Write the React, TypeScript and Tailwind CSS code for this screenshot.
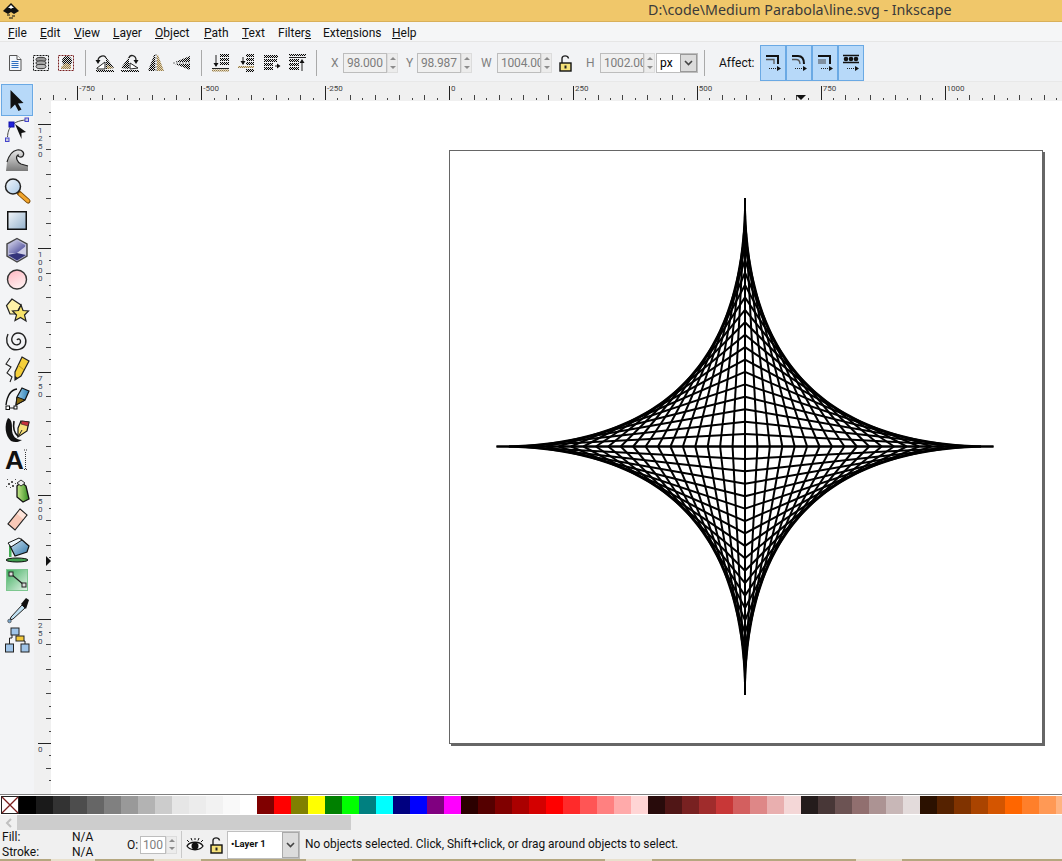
const FONT = "font-['Roboto',sans-serif]";

const swatches = [
  "#000000", "#1a1a1a", "#333333", "#4d4d4d", "#666666", "#808080", "#999999", "#b3b3b3", "#cccccc", "#e6e6e6", "#ececec", "#f2f2f2", "#f9f9f9", "#ffffff",
  "#800000", "#ff0000", "#808000", "#ffff00", "#008000", "#00ff00", "#008080", "#00ffff", "#000080", "#0000ff", "#800080", "#ff00ff",
  "#2b0000", "#550000", "#800000", "#aa0000", "#d40000", "#ff0000", "#ff2a2a", "#ff5555", "#ff8080", "#ffaaaa", "#ffd5d5",
  "#280b0b", "#501616", "#782121", "#a02c2c", "#c83737", "#d35f5f", "#de8787", "#e9afaf", "#f4d7d7",
  "#241c1c", "#483737", "#6c5353", "#916f6f", "#ac9393", "#c8b7b7", "#e3dbdb",
  "#2b1100", "#552200", "#803300", "#aa4400", "#d45500", "#ff6600", "#ff7f2a", "#ff9955", "#ffb380", "#ffccaa",
];

const menus: [string, string, string, string][] = [
  ["", "F", "ile", "w-[32px]"], ["", "E", "dit", "w-[34px]"], ["", "V", "iew", "w-[39px]"], ["", "L", "ayer", "w-[42px]"], ["", "O", "bject", "w-[49px]"],
  ["", "P", "ath", "w-[38px]"], ["", "T", "ext", "w-[36px]"], ["Filter", "s", "", "w-[45px]"], ["Exte", "n", "sions", "w-[69px]"], ["", "H", "elp", "w-[40px]"],
];

// one quadrant of lines per sign pair, 20 steps along each axis
const artLines: [number, number, number, number][] = [];
for (let i = 0; i <= 20; i++) {
  const a = (248.5 * i) / 20;
  const b = 248.5 - a;
  artLines.push([295, 295.5 - a, 295 + b, 295.5]);
  artLines.push([295, 295.5 - a, 295 - b, 295.5]);
  artLines.push([295, 295.5 + a, 295 + b, 295.5]);
  artLines.push([295, 295.5 + a, 295 - b, 295.5]);
}

const Defs = () => (
  <svg className="absolute w-0 h-0">
    <defs>
      <pattern id="dither" width="2" height="2" patternUnits="userSpaceOnUse">
        <rect width="2" height="2" fill="#ddd" />
        <rect width="1" height="1" fill="#000" />
        <rect x="1" y="1" width="1" height="1" fill="#000" />
      </pattern>
      <pattern id="ditherTan" width="2" height="2" patternUnits="userSpaceOnUse">
        <rect width="2" height="2" fill="#f0d9a8" />
        <rect width="1" height="1" fill="#8a7a5a" />
        <rect x="1" y="1" width="1" height="1" fill="#8a7a5a" />
      </pattern>
      <linearGradient id="gRect" x1="0" y1="0" x2="1" y2="1">
        <stop offset="0" stopColor="#f4f7fa" />
        <stop offset="1" stopColor="#93b1cc" />
      </linearGradient>
      <linearGradient id="gWave" x1="0" y1="0" x2="0" y2="1">
        <stop offset="0" stopColor="#e8e8e8" />
        <stop offset="1" stopColor="#7a7a7a" />
      </linearGradient>
      <linearGradient id="gCircle" x1="0.2" y1="0" x2="0.7" y2="1">
        <stop offset="0" stopColor="#ffb9c2" />
        <stop offset="1" stopColor="#fff2f2" />
      </linearGradient>
      <linearGradient id="gLens" x1="0" y1="0" x2="1" y2="1">
        <stop offset="0" stopColor="#f2f7fc" />
        <stop offset="1" stopColor="#a9c8e6" />
      </linearGradient>
      <linearGradient id="gGreen" x1="0" y1="0" x2="1" y2="1">
        <stop offset="0" stopColor="#3fae5f" />
        <stop offset="1" stopColor="#e4f4e8" />
      </linearGradient>
      <linearGradient id="gCan" x1="0" y1="0" x2="1" y2="0">
        <stop offset="0" stopColor="#c8e88a" />
        <stop offset="1" stopColor="#2f8a1e" />
      </linearGradient>
      <linearGradient id="gBucket" x1="0" y1="0" x2="1" y2="1">
        <stop offset="0" stopColor="#d3e6f5" />
        <stop offset="1" stopColor="#2f76a8" />
      </linearGradient>
      <linearGradient id="gBox" x1="0" y1="0" x2="1" y2="1">
        <stop offset="0" stopColor="#d9d9ee" />
        <stop offset="1" stopColor="#3f3f92" />
      </linearGradient>
      <linearGradient id="gNib" x1="0" y1="0" x2="1" y2="0">
        <stop offset="0" stopColor="#a8d4ee" />
        <stop offset="1" stopColor="#2b7fb5" />
      </linearGradient>
    </defs>
  </svg>
);

const Tool = ({ children }: { children: React.ReactNode }) => (
  <svg width="30" height="30" viewBox="0 0 30 30" fill="none">
    {children}
  </svg>
);

const tools = [
  <Tool key="sel">
    <path d="M8.5 5 L8.5 24 L13 19.5 L16.5 26 L19.5 24.5 L16 18.5 L21.5 18 Z" fill="#111" />
  </Tool>,
  <Tool key="node">
    <path d="M5.5 22 C6 14 9 6 24 5" stroke="#444" strokeWidth="1" />
    <rect x="7" y="7" width="5" height="5" fill="#2222dd" stroke="#1111aa" />
    <rect x="23" y="3" width="3.5" height="3.5" fill="#ccd" stroke="#4444cc" />
    <rect x="3.5" y="23" width="3.5" height="3.5" fill="#ccd" stroke="#4444cc" />
    <path d="M13 9 L24 17 L19.5 18 L19.5 24 Z" fill="#111" />
  </Tool>,
  <Tool key="tweak">
    <path d="M4 26 L5 17 C7 10 10 6 15 5 C20 4 23 8 21 11 C19 13 16 12 16 10 C13 12 15 17 19 19 L26 21 L26 26 Z" fill="url(#gWave)" />
    <path d="M5 17 C7 10 10 6 15 5 C20 4 23 8 21 11 C19 13 16 12 16 10 C13 12 15 17 19 19 L26 21" stroke="#222" strokeWidth="1.2" />
  </Tool>,
  <Tool key="zoom">
    <path d="M17 18 L26 26" stroke="#7a4a08" strokeWidth="5" strokeLinecap="round" />
    <path d="M18 19 L26 26" stroke="#f2a62e" strokeWidth="3" strokeLinecap="round" />
    <circle cx="11" cy="11.5" r="7.5" fill="url(#gLens)" stroke="#222" strokeWidth="1.5" />
  </Tool>,
  <Tool key="rect">
    <rect x="5.75" y="6.75" width="18.5" height="17.5" fill="url(#gRect)" stroke="#111" strokeWidth="1.5" />
  </Tool>,
  <Tool key="box">
    <path d="M15 3.5 L25 9 L25 21 L15 27 L5 21 L5 9 Z" fill="#b8b8d8" stroke="#444" strokeWidth="1.4" />
    <path d="M7 10 L15 5.5 L23 10 L23 14 L15 18 L7 18 Z" fill="url(#gBox)" />
    <path d="M15 18 L15 25 L24 20 L24 11 Z" fill="#cfcfe6" />
    <path d="M6 20 L15 18 L24 20 L15 25.5 Z" fill="#34347a" />
  </Tool>,
  <Tool key="circle">
    <circle cx="15" cy="14.5" r="9.5" fill="url(#gCircle)" stroke="#333" strokeWidth="1.4" />
  </Tool>,
  <Tool key="star">
    <path d="M10 4 L4.5 10.5 L8 19 L14 19 L19 10 L13 6 Z" fill="#fff2a8" stroke="#222" strokeWidth="1.2" />
    <path d="M19 10 L21 15.5 L26.5 16 L22.5 20 L24 26 L18.5 22.5 L13 25.5 L14.5 20 L10.5 16 L16.5 15.5 Z" fill="#f7e36a" stroke="#222" strokeWidth="1.2" />
  </Tool>,
  <Tool key="spiral">
    <path d="M15 15 C16 13 19 14 18.5 17 C18 20 13 21 11 18 C8 14 11 8 16 8 C22 8 25 14 23.5 19 C22 24 15 26 10 24 C5 21 3 15 6 9" stroke="#222" strokeWidth="1.4" />
  </Tool>,
  <Tool key="pencil">
    <path d="M8 3 L4 9 L9 12 L5 18 L10 22 L8 27" stroke="#222" strokeWidth="1.1" />
    <path d="M20 2 L27 6 L19 21 L13 25 L13 17 Z" fill="#f5cf3a" stroke="#222" strokeWidth="1.2" />
    <path d="M16 10 L22 15" stroke="#a77f10" strokeWidth="0.8" />
    <path d="M13 25 L13 21 L16 23 Z" fill="#222" />
  </Tool>,
  <Tool key="pen">
    <path d="M4 20 C5 12 8 5 15 4" stroke="#111" strokeWidth="1.4" />
    <rect x="4" y="21" width="3.5" height="3.5" fill="#fff" stroke="#111" />
    <path d="M7.5 23 L12 23" stroke="#111" />
    <rect x="12" y="21" width="3" height="3" fill="#fff" stroke="#111" />
    <path d="M20 3 L27 6 L23 15 L14 20 L15 12 Z" fill="url(#gNib)" stroke="#111" strokeWidth="1.2" />
    <path d="M15 12 L23 15 L14 20 Z" fill="#8a6a10" stroke="#111" />
  </Tool>,
  <Tool key="calligraphy">
    <path d="M6 3 C2 10 3 21 9 26 C13 28 17 27 20 25 C14 25 10 21 10 14 C10 9 10 5 6 3 Z" fill="#111" />
    <path d="M12 6 C11 12 12 18 16 21" stroke="#111" strokeWidth="1.6" />
    <path d="M19 6 L27 7 L25 16 L16 22 L16 13 Z" fill="#f7e07a" stroke="#111" strokeWidth="1.2" />
    <path d="M20 6 L27 7 L26 11 L19 9 Z" fill="#c8323c" stroke="#222" strokeWidth="0.6" />
    <path d="M16 22 L20 15" stroke="#222" />
  </Tool>,
  <Tool key="text">
    <text x="3" y="24" fontFamily="'Liberation Sans',sans-serif" fontWeight="700" fontSize="26" fill="#111">A</text>
    <path d="M22 5 H25 M23.5 7 V24 M22 24.5 H25" stroke="#333" strokeWidth="1" strokeDasharray="1 1" />
  </Tool>,
  <Tool key="spray">
    <path d="M5 4 h1 v1 h-1z M9 6 h2 v2 h-2z M13 4 h1 v1 h-1z M6 8 h2 v2 h-2z M10 10 h2 v2 h-2z M4 11 h1 v1 h-1z M8 12 h1 v1 h-1z M13 8 h1 v1 h-1z" fill="#555" />
    <path d="M15 11 L19 7 L24 11 L27 24 L21 27 L15 22 Z" fill="url(#gCan)" stroke="#111" strokeWidth="1.3" />
    <path d="M15 8 L19 5 L23 8 L19 11 Z" fill="#eee" stroke="#222" strokeWidth="0.9" />
  </Tool>,
  <Tool key="eraser">
    <path d="M18 4 L25 10 L13 25 L6 19 Z" fill="#f8c9b8" stroke="#222" strokeWidth="1.2" />
    <path d="M18 5 L24 10 L21 14 L15 9 Z" fill="#fde4da" />
  </Tool>,
  <Tool key="bucket">
    <ellipse cx="15" cy="25" rx="11" ry="2" fill="#3f9e4e" stroke="#111" />
    <path d="M7 9 L7 22 L9.5 22 L9.5 12 Z" fill="#45ad56" />
    <path d="M8 11 L13 21 L25 17 L27 11 L19 4 Z" fill="url(#gBucket)" stroke="#111" strokeWidth="1.2" />
    <path d="M6 8 L17 3 L20 5 L9 12 Z" fill="#eef6fc" stroke="#111" strokeWidth="1" />
  </Tool>,
  <Tool key="gradient">
    <rect x="4.5" y="4.5" width="21" height="21" fill="url(#gGreen)" stroke="#7cc68f" />
    <path d="M9 9 L22 20" stroke="#222" strokeWidth="1.2" />
    <rect x="7" y="7" width="4" height="4" fill="#ddd" stroke="#222" />
    <rect x="20" y="18" width="4" height="4" fill="#ddd" stroke="#222" />
  </Tool>,
  <Tool key="dropper">
    <path d="M20 10 L23 13 L11 24 L8 25 L9 22 Z" fill="#bfe0f2" stroke="#222" strokeWidth="1" />
    <path d="M19 9 L24 3 L27 5 L24 14 Z" fill="#111" />
    <circle cx="7.5" cy="26" r="1.8" fill="#7aa4c8" stroke="#333" strokeWidth="0.6" />
  </Tool>,
  <Tool key="connector">
    <rect x="9" y="3" width="8" height="7" fill="#9fc4e8" stroke="#222" />
    <rect x="14" y="11" width="8" height="5" fill="#f4c93a" stroke="#222" />
    <rect x="3.5" y="19" width="8" height="8" fill="#9fc4e8" stroke="#222" />
    <rect x="19" y="19" width="8" height="8" fill="#9fc4e8" stroke="#222" />
    <path d="M10 10 V13 H7.5 V19 M22 16 H23 V19" stroke="#222" />
  </Tool>,
];

const Icon = ({ ml, children }: { ml: string; children: React.ReactNode }) => (
  <svg className={`shrink-0 ${ml}`} width="20" height="20" viewBox="0 0 20 20" fill="none">
    {children}
  </svg>
);

const Sep = ({ ml }: { ml: string }) => <div className={`shrink-0 w-px h-[26px] bg-[#a9a9a9] ${ml}`} />;

const Spinner = ({ h = "h-[20px]" }: { h?: string }) => (
  <div className={`w-[11px] ${h} shrink-0 flex flex-col items-center justify-around bg-[#ececec] border border-[#dcdcdc]`}>
    <div className="w-0 h-0 border-x-[3px] border-x-transparent border-b-[3px] border-b-[#8c8c8c]" />
    <div className="w-0 h-0 border-x-[3px] border-x-transparent border-t-[3px] border-t-[#8c8c8c]" />
  </div>
);

const NumBox = ({ value }: { value: string }) => (
  <div className="w-[44px] h-[20px] shrink-0 border border-[#bdbdbd] bg-[#f0f0f0] text-[12px] tracking-[-0.2px] text-[#7d7d7d] flex items-center pl-[3px] overflow-hidden whitespace-nowrap">
    {value}
  </div>
);

const NumField = ({ label, value, labelW }: { label: string; value: string; labelW: string }) => (
  <>
    <span className={`${labelW} text-[12px] text-[#808080] shrink-0`}>{label}</span>
    <NumBox value={value} />
    <Spinner />
  </>
);

const Lock = ({ ml }: { ml: string }) => (
  <svg className={`shrink-0 ${ml}`} width="15" height="20" viewBox="0 0 15 20" fill="none">
    <path d="M4 10 V5.5 C4 2 10 2 10.5 5.5" stroke="#222" strokeWidth="1.4" />
    <rect x="2" y="10" width="11" height="8" fill="#f6e27a" stroke="#111" strokeWidth="1.4" />
    <rect x="6.5" y="12.5" width="2" height="3" fill="#222" />
  </svg>
);

const Affect = ({ children }: { children: React.ReactNode }) => (
  <div className="w-[26px] h-[36px] flex items-center justify-center bg-[#b7d9f9] border border-[#6aa9e4] shrink-0">
    <svg width="20" height="20" viewBox="0 0 20 20" fill="none">
      {children}
    </svg>
  </div>
);

const Arrow = () => (
  <>
    <path d="M6 15.5 H15" stroke="#222" strokeWidth="1" strokeDasharray="1 1" />
    <path d="M14 13 L18 15.5 L14 18 Z" fill="#111" />
  </>
);

const HRuler = () => {
  const ticks = [];
  for (let i = -34; i <= 50; i++) {
    const x = 415 + i * 12.39;
    const major = i % 10 === 0;
    const mid = Math.abs(i % 2) === 0;
    ticks.push(
      <path key={i} d={`M${Math.round(x) + 0.5} ${major ? 4 : mid ? 13 : 16} V18`} stroke={major ? "#222" : "#444"} />
    );
  }
  const labels = [-3, -2, -1, 0, 1, 2, 3, 4];
  return (
    <div className="relative h-[19px] bg-[#f0f0f0] overflow-hidden">
      <svg width="1028" height="19" className="block">
        {ticks}
        <path d="M762 13 H772 L767 18 Z" fill="#111" />
      </svg>
      {labels.map((k) => (
        <span
          key={k}
          className="absolute top-[2px] text-[8px] leading-[10px] text-[#444]"
          style={{ left: 417 + k * 123.9 }}
        >
          {k * 250}
        </span>
      ))}
    </div>
  );
};

const VRuler = () => {
  const ticks = [];
  for (let i = -10; i <= 60; i++) {
    const y = 642 - i * 12.38;
    const major = i % 10 === 0;
    const mid = i % 2 === 0;
    ticks.push(
      <path key={i} d={`M${major ? 4 : mid ? 12 : 15} ${Math.round(y) + 0.5} H17`} stroke={major ? "#222" : "#444"} />
    );
  }
  const labels = [0, 1, 2, 3, 4, 5];
  return (
    <div className="relative w-[17px] shrink-0 bg-[#f0f0f0] overflow-hidden">
      <svg width="17" height="692" className="block">
        {ticks}
        <path d="M12 455 L17 460 L12 465 Z" fill="#111" />
      </svg>
      {labels.map((k) => (
        <div
          key={k}
          className="absolute left-[4px] flex flex-col text-[8px] leading-[8px] text-[#3c4654]"
          style={{ top: 645 - k * 123.8 }}
        >
          {String(k * 250).split("").map((d, n) => (
            <span key={n}>{d}</span>
          ))}
        </div>
      ))}
    </div>
  );
};

const App = () => {
  return (
    <div className={`w-[1062px] h-[861px] overflow-hidden flex flex-col bg-[#f0f0f0] text-black ${FONT}`}>
      <Defs />

      {/* Title bar */}
      <div className="h-[22px] shrink-0 bg-[#f0c76a] border-b border-[#d9b05a] flex items-center relative">
        <svg className="ml-[2px] shrink-0" width="18" height="18" viewBox="0 0 18 18">
          <path d="M9 1 L17 9 L12 12 L9 10 L6 12 L1 9 Z" fill="#111" />
          <path d="M9 3 L12 6 L10 6 L9 7 L8 6 L6 6 Z" fill="#fff" />
          <path d="M5 13 H8 M10 14 H13 M7 16 H11" stroke="#111" strokeWidth="1.2" />
        </svg>
        <span className="ml-[628px] font-['Noto_Sans',sans-serif] text-[14.25px] leading-none text-[#3a3a3a] whitespace-nowrap">
          D:\code\Medium Parabola\line.svg - Inkscape
        </span>
      </div>

      {/* Menu bar */}
      <div className="h-[20px] shrink-0 bg-[#f5f6f7] border-b border-[#e6e6e6] flex items-center text-[12px] text-[#111] pl-[8px] pt-[2px]">
        {menus.map(([a, u, b, w]) => (
          <span key={u + b} className={`${w} whitespace-nowrap`}>
            {a}
            <u>{u}</u>
            {b}
          </span>
        ))}
      </div>

      {/* Command bar */}
      <div className="h-[40px] shrink-0 bg-[#f2f3f5] border-b border-[#e8e8e8] flex items-center pt-[2px]">
        <Icon ml="ml-[5px]">
          <path d="M4.5 2.5 H12 L16 6.5 V17.5 H4.5 Z" fill="#f4f7fb" stroke="#555" />
          <path d="M12 2.5 V6.5 H16" fill="#fff" stroke="#555" />
          <path d="M6.5 8.5 H13.5 M6.5 10.5 H13.5 M6.5 12.5 H13.5 M6.5 14.5 H13.5" stroke="#2f6fc0" />
        </Icon>
        <Icon ml="ml-[6px]">
          <rect x="2.5" y="2.5" width="15" height="15" stroke="#111" strokeDasharray="2 1" />
          <ellipse cx="10" cy="6.5" rx="5" ry="2.2" fill="#999" stroke="#333" />
          <ellipse cx="10" cy="10" rx="5" ry="2.2" fill="#aaa" stroke="#333" />
          <ellipse cx="10" cy="13.5" rx="5" ry="2.2" fill="#bbb" stroke="#333" />
        </Icon>
        <Icon ml="ml-[5px]">
          <rect x="2.5" y="2.5" width="15" height="15" stroke="#7a1f1f" strokeDasharray="2 1" />
          <circle cx="11" cy="8" r="5" fill="url(#dither)" />
          <path d="M5 14 L10 10 L15 12 L15 16 L5 16 Z" fill="url(#ditherTan)" />
        </Icon>
        <Sep ml="ml-[9px]" />
        <Icon ml="ml-[9px]">
          <path d="M3 8 C3 3 10 1 11 5" stroke="#222" strokeWidth="1.3" />
          <path d="M0.5 7 H5.5 L3 11 Z" fill="#111" />
          <path d="M2 15 L10 9 V16 H2 Z" fill="#fff" stroke="#222" />
          <path d="M11 4 L19 15 L11 16 Z" fill="url(#dither)" />
          <path d="M12 12 L19 15 L12 16 Z" fill="url(#ditherTan)" />
          <rect x="1" y="17" width="18" height="2" fill="url(#dither)" />
        </Icon>
        <Icon ml="ml-[5px]">
          <path d="M9 5 C10 1 16 2 16 7" stroke="#222" strokeWidth="1.3" />
          <path d="M13.5 7 H18.5 L16 11 Z" fill="#111" />
          <path d="M9 4 L1 15 L9 16 Z" fill="url(#dither)" />
          <path d="M10 10 L18 15 L10 16 Z" fill="#fff" stroke="#222" />
          <rect x="1" y="17" width="18" height="2" fill="url(#dither)" />
        </Icon>
        <Icon ml="ml-[6px]">
          <path d="M8 2 L2 18 H9 V2 Z" fill="url(#dither)" />
          <path d="M12 2 L18 18 H11 V2 Z" fill="url(#ditherTan)" />
          <path d="M10 1 V19" stroke="#777" strokeDasharray="2 1" />
        </Icon>
        <Icon ml="ml-[6px]">
          <path d="M18 3 V9 H3 Z" fill="url(#dither)" />
          <path d="M18 17 V11 H3 Z" fill="url(#dither)" />
          <path d="M1 10 H19" stroke="#777" strokeDasharray="2 1" />
        </Icon>
        <Sep ml="ml-[9px]" />
        <Icon ml="ml-[9px]">
          <path d="M5 2 V13" stroke="#222" />
          <path d="M2.5 10 L5 14 L7.5 10 Z" fill="#111" />
          <path d="M1 15.5 H18" stroke="#222" />
          <rect x="9" y="1" width="9" height="3" fill="url(#dither)" />
          <rect x="9" y="5" width="9" height="3" fill="url(#dither)" />
          <rect x="9" y="9" width="9" height="3" fill="url(#dither)" />
          <rect x="1" y="16.5" width="17" height="2" fill="url(#ditherTan)" />
        </Icon>
        <Icon ml="ml-[5px]">
          <path d="M7 4 V11" stroke="#222" />
          <path d="M4.5 8 L7 12 L9.5 8 Z" fill="#111" />
          <rect x="2" y="13" width="16" height="2" fill="url(#ditherTan)" />
          <rect x="10" y="1" width="8" height="3" fill="url(#dither)" />
          <rect x="10" y="5" width="8" height="3" fill="url(#dither)" />
          <rect x="10" y="9" width="8" height="3" fill="url(#dither)" />
          <rect x="10" y="16" width="8" height="3" fill="url(#dither)" />
        </Icon>
        <Icon ml="ml-[6px]">
          <rect x="2" y="2" width="14" height="3" fill="url(#dither)" />
          <rect x="2" y="6" width="13" height="3" fill="url(#dither)" />
          <rect x="2" y="10" width="9" height="3" fill="url(#dither)" />
          <rect x="2" y="14" width="9" height="3" fill="url(#dither)" />
          <path d="M13 13 H16" stroke="#222" />
          <path d="M15 10.5 L18.5 13 L15 15.5 Z" fill="#111" />
        </Icon>
        <Icon ml="ml-[6px]">
          <rect x="1" y="1" width="17" height="2" fill="url(#dither)" />
          <path d="M1 4.5 H18" stroke="#222" />
          <rect x="1" y="6" width="10" height="3" fill="url(#dither)" />
          <rect x="1" y="10" width="10" height="3" fill="url(#dither)" />
          <rect x="1" y="14" width="10" height="3" fill="url(#dither)" />
          <path d="M14 18 V8" stroke="#222" />
          <path d="M11.5 10 L14 6 L16.5 10 Z" fill="#111" />
        </Icon>
        <Sep ml="ml-[8px]" />
        <div className="ml-[14px] flex items-center">
          <NumField label="X" value="98.000" labelW="w-[12px]" />
          <span className="w-[8px]" />
          <NumField label="Y" value="98.987" labelW="w-[11px]" />
          <span className="w-[9px]" />
          <NumField label="W" value="1004.00" labelW="w-[16px]" />
          <Lock ml="ml-[6px]" />
          <span className="ml-[13px] w-[14px] text-[12px] text-[#808080] shrink-0">H</span>
          <NumBox value="1002.00" />
          <Spinner />
          <div className="ml-px w-[42px] h-[20px] shrink-0 bg-white border border-[#bdbdbd] flex items-center text-[12px] pl-[3px] justify-between">
            px
            <div className="w-[17px] h-[18px] bg-[#dcdcdc] border border-[#999] flex items-center justify-center">
              <svg width="9" height="6" viewBox="0 0 9 6" fill="none">
                <path d="M1 1 L4.5 4.5 L8 1" stroke="#444" strokeWidth="1.6" />
              </svg>
            </div>
          </div>
        </div>
        <Sep ml="ml-[6px]" />
        <span className="ml-[14px] w-[41px] shrink-0 text-[12px] text-[#111]">Affect:</span>
        <div className="flex">
          <Affect>
            <path d="M3 3 H15 V11" stroke="#111" strokeWidth="2" />
            <path d="M3 6.5 H11 V11" stroke="#555" strokeWidth="1.3" />
            <Arrow />
          </Affect>
          <Affect>
            <path d="M3 3 H9 C13 3 15 6 15 11" stroke="#111" strokeWidth="2" />
            <path d="M3 6.5 H7 C10 6.5 11 8 11 11" stroke="#555" strokeWidth="1.3" />
            <Arrow />
          </Affect>
          <Affect>
            <path d="M3 3 H15 V11" stroke="#111" strokeWidth="2" />
            <rect x="3" y="6" width="8" height="5" fill="#7f8fa0" />
            <Arrow />
          </Affect>
          <Affect>
            <path d="M2 2.5 H18 M2 9.5 H18" stroke="#111" strokeWidth="1.5" />
            <circle cx="5" cy="6" r="2.3" fill="#111" />
            <circle cx="10" cy="6" r="2.3" fill="#111" />
            <circle cx="15" cy="6" r="2.3" fill="#111" />
            <Arrow />
          </Affect>
        </div>
      </div>

      {/* Work area */}
      <div className="flex-1 min-h-0 flex">
        <div className="w-[34px] shrink-0 bg-[#f3f4f6] pt-[3px] pl-[2px] flex flex-col">
          {tools.map((t, i) => (
            <div key={i} className={`w-[30px] h-[30px] shrink-0 ${i === 0 ? "bg-[#b7d9f9] outline outline-[#6aa9e4]" : ""}`}>
              {t}
            </div>
          ))}
        </div>
        <div className="flex-1 min-w-0 flex flex-col">
          <HRuler />
          <div className="flex-1 min-h-0 flex">
            <VRuler />
            <div className="flex-1 min-w-0 bg-white overflow-hidden pl-[398px] pt-[49px]">
              <div className="w-[594px] h-[594px] bg-white border border-[#666] shadow-[2px_2px_0_#666]">
                <svg width="592" height="592" viewBox="0 0 592 592" fill="none" className="block">
                  {artLines.map(([x1, y1, x2, y2], i) => (
                    <line key={i} x1={x1} y1={y1} x2={x2} y2={y2} stroke="#000" strokeWidth="2" />
                  ))}
                </svg>
              </div>
            </div>
          </div>
        </div>
      </div>

      {/* Palette */}
      <div className="h-[21px] shrink-0 bg-white border-t border-[#808080] pt-px flex overflow-hidden pb-[2px]">
        <div className="w-[19px] shrink-0 pl-px">
          <svg width="18" height="18" viewBox="0 0 18 18" className="block">
            <rect x="0.5" y="0.5" width="17" height="17" fill="#fff" stroke="#222" />
            <path d="M1 1 L17 17 M17 1 L1 17" stroke="#7a1f1f" strokeWidth="1.3" />
          </svg>
        </div>
        {swatches.map((c, i) => (
          <div key={i} className="w-[17px] h-[18px] shrink-0" style={{ backgroundColor: c }} />
        ))}
      </div>

      {/* Scrollbar */}
      <div className="h-[15px] shrink-0 bg-[#f0f0f0] flex items-center">
        <div className="w-[17px] flex justify-center">
          <svg width="8" height="10" viewBox="0 0 8 10" fill="none">
            <path d="M6 1 L2 5 L6 9" stroke="#c0c0c0" strokeWidth="2" />
          </svg>
        </div>
        <div className="w-[334px] h-[15px] bg-[#cdcdcd]" />
      </div>

      {/* Status bar */}
      <div className="h-[29px] shrink-0 bg-[#f0f0f0] flex items-center text-[12px] text-[#111]">
        <div className="ml-[2px] w-[70px] leading-[15px] pt-[1px]">
          <div>Fill:</div>
          <div>Stroke:</div>
        </div>
        <div className="w-[55px] leading-[15px] pt-[1px]">
          <div>N/A</div>
          <div>N/A</div>
        </div>
        <span className="w-[13px]">O:</span>
        <div className="w-[26px] h-[18px] border border-[#bdbdbd] bg-white text-[#808080] flex items-center justify-center">100</div>
        <Spinner h="h-[18px]" />
        <div className="ml-[4px] w-px h-[27px] bg-[#c9c9c9]" />
        <svg className="ml-[4px] shrink-0" width="18" height="16" viewBox="0 0 18 16" fill="none">
          <path d="M1 9 C4 4 14 4 17 9 C14 14 4 14 1 9 Z" fill="#fff" stroke="#111" strokeWidth="1.3" />
          <circle cx="9" cy="9" r="3.5" fill="#111" />
          <path d="M3 5 L1 3 M6 3.5 L5 1 M9 3 V1 M12 3.5 L13 1 M15 5 L17 3" stroke="#111" />
        </svg>
        <Lock ml="ml-[5px]" />
        <div className="ml-[3px] w-[73px] h-[28px] shrink-0 bg-white border border-[#c0c0c0] flex items-center justify-between">
          <span className="pl-[3px] text-[9.5px] font-bold whitespace-nowrap">•Layer 1</span>
          <div className="w-[17px] h-full bg-[#dcdcdc] border border-[#aaa] flex items-center justify-center">
            <svg width="9" height="6" viewBox="0 0 9 6" fill="none">
              <path d="M1 1 L4.5 4.5 L8 1" stroke="#444" strokeWidth="1.6" />
            </svg>
          </div>
        </div>
        <span className="ml-[5px] text-[11.9px] whitespace-nowrap">No objects selected. Click, Shift+click, or drag around objects to select.</span>
      </div>

      {/* Taskbar edge */}
      <div className="h-[2px] shrink-0 bg-[#b5a77f] flex">
        <div className="ml-[51px] w-[44px] bg-[#e8e0cc]" />
        <div className="ml-[59px] w-[47px] bg-[#e8e0cc]" />
        <div className="ml-[105px] w-[46px] bg-[#e8e0cc]" />
        <div className="ml-[253px] w-[47px] bg-[#e8e0cc]" />
        <div className="ml-[204px] w-[46px] bg-[#e8e0cc]" />
      </div>
    </div>
  );
};

export default App;
